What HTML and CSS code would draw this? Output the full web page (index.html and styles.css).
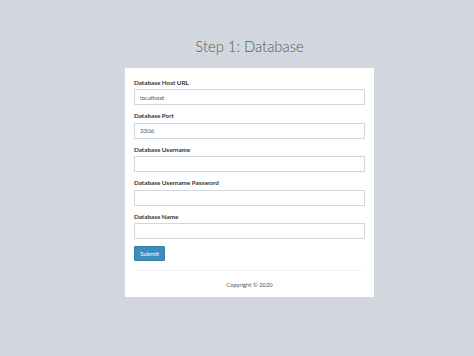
FILE: index.html
```html
<!DOCTYPE html>
<html lang="en">
<head>
    <meta charset="UTF-8">
    <meta name="viewport" content="width=device-width, initial-scale=1.0">
    <title>Step 1: Database</title>
    <link rel="stylesheet" href="styles.css">
</head>
<body>
    <div class="container">
        <h1 class="title">Step 1: Database</h1>

        <div class="card">
            <form class="install-form">
                <div class="form-group">
                    <label for="dbHost">Database Host URL</label>
                    <input type="text" id="dbHost" class="form-control" value="localhost">
                </div>

                <div class="form-group">
                    <label for="dbPort">Database Port</label>
                    <input type="text" id="dbPort" class="form-control" value="3306">
                </div>

                <div class="form-group">
                    <label for="dbUser">Database Username</label>
                    <input type="text" id="dbUser" class="form-control">
                </div>

                <div class="form-group">
                    <label for="dbPass">Database Username Password</label>
                    <input type="password" id="dbPass" class="form-control">
                </div>

                <div class="form-group">
                    <label for="dbName">Database Name</label>
                    <input type="text" id="dbName" class="form-control">
                </div>

                <button type="submit" class="btn btn-primary">Submit</button>
            </form>

            <footer class="card-footer">Copyright &copy; 2020</footer>
        </div>
    </div>
</body>
</html>
```

FILE: styles.css
```css
* {
    margin: 0;
    padding: 0;
    box-sizing: border-box;
    font-family: Lato, "Open Sans", sans-serif;
}

body {
    background-color: #d2d6de;
}

.container {
    width: 249px;
    margin-left: 125px;
    padding-top: 35px;
}

.title {
    text-align: center;
    font-size: 14.8px;
    font-weight: 300;
    line-height: 22px;
    color: #5a5a5a;
    margin-bottom: 11px;
}

.card {
    background: #fff;
    padding: 9.5px 9px 7px;
}

.form-group {
    margin-bottom: 6px;
}

.form-group label {
    display: block;
    font-size: 6.3px;
    font-weight: 700;
    line-height: 9px;
    color: #333;
    margin-bottom: 2.5px;
}

.form-control {
    display: block;
    width: 100%;
    height: 16px;
    padding: 0 5px;
    border: 1px solid #d2d6de;
    font-size: 6.2px;
    color: #555;
    background: #fff;
}

.btn {
    border: none;
    cursor: pointer;
    font-size: 6.2px;
}

.btn-primary {
    display: block;
    margin-top: 7px;
    width: 31px;
    height: 15px;
    border: 1px solid #367fa9;
    border-radius: 1px;
    background: #3c8dbc;
    color: #fff;
}

.card-footer {
    margin: 9px 2px 0;
    padding-top: 9px;
    border-top: 1px solid #f2f2f2;
    text-align: center;
    font-size: 5.8px;
    line-height: 10px;
    color: #555;
}
```
